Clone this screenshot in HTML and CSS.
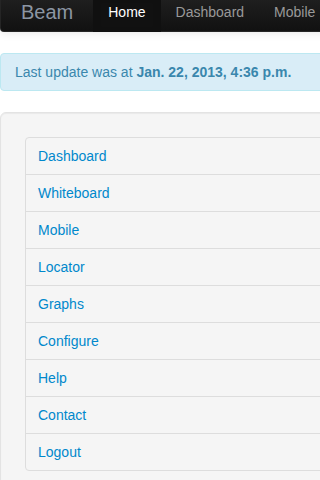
FILE: index.html
```html
<!DOCTYPE html>
<html lang="en">

<head>
    <meta charset="UTF-8">
    <meta name="viewport" content="width=device-width, initial-scale=1.0">
    <title>Beam</title>

    <link rel="stylesheet" href="styles.css">
</head>

<body>
    <div id="page">
        <!-- Top navigation -->
        <div class="navbar">
            <a class="brand" href="#">Beam</a>
            <ul class="nav">
                <li class="active"><a href="#">Home</a></li>
                <li><a href="#">Dashboard</a></li>
                <li><a href="#">Mobile</a></li>
                <li><a href="#">Locator</a></li>
                <li><a href="#">Graphs</a></li>
            </ul>
        </div>

        <div class="alert">Last update was at <strong>Jan. 22, 2013, 4:36 p.m.</strong></div>

        <div class="well">
            <ul class="nav-stacked">
                <li><a href="#">Dashboard</a></li>
                <li><a href="#">Whiteboard</a></li>
                <li><a href="#">Mobile</a></li>
                <li><a href="#">Locator</a></li>
                <li><a href="#">Graphs</a></li>
                <li><a href="#">Configure</a></li>
                <li><a href="#">Help</a></li>
                <li><a href="#">Contact</a></li>
                <li><a href="#">Logout</a></li>
            </ul>
        </div>
    </div>
</body>

</html>
```

FILE: styles.css
```css
html,
body {
  overflow: hidden;
}
body {
  margin: 0;
  font-family: 'Liberation Sans', Arial, sans-serif;
  font-size: 14px;
  line-height: 20px;
  color: #333333;
  background: #ffffff;
}
#page {
  width: 940px;
}
a {
  text-decoration: none;
}
ul {
  list-style: none;
  margin: 0;
  padding: 0;
}
/* Dark navbar, its top is pushed out of view */
.navbar {
  display: flex;
  margin-top: -8px;
  height: 40px;
  padding: 0;
  background: linear-gradient(to bottom, #222222, #111111);
  border: 1px solid #252525;
  border-top: none;
  border-radius: 0 0 4px 4px;
  box-shadow: 0 1px 10px rgba(0, 0, 0, 0.1);
  box-sizing: border-box;
}
.brand {
  display: block;
  padding: 10px 20px;
  font-size: 20px;
  line-height: 20px;
  font-weight: 200;
  color: #8c96a3;
}
.nav {
  display: flex;
}
.nav li a {
  display: block;
  padding: 10px 15px;
  color: #999999;
}
.nav li.active a {
  color: #ffffff;
  background: #111111;
  box-shadow: inset 0 3px 8px rgba(0, 0, 0, 0.125);
}
/* Info alert */
.alert {
  margin: 21px 0 21px;
  padding: 8px 35px 8px 14px;
  background: #d9edf7;
  border: 1px solid #bce8f1;
  border-radius: 4px;
  color: #3a87ad;
}
.alert strong {
  font-weight: bold;
}
/* Well with the stacked menu */
.well {
  padding: 24px;
  background: #f5f5f5;
  border: 1px solid #e3e3e3;
  border-radius: 6px;
  box-shadow: inset 0 1px 1px rgba(0, 0, 0, 0.05);
}
.nav-stacked li a {
  display: block;
  padding: 8px 12px;
  margin-bottom: -1px;
  border: 1px solid #dddddd;
  color: #0088cc;
}
.nav-stacked li:first-child a {
  border-radius: 4px 4px 0 0;
}
.nav-stacked li:last-child a {
  margin-bottom: 0;
  border-radius: 0 0 4px 4px;
}
```
